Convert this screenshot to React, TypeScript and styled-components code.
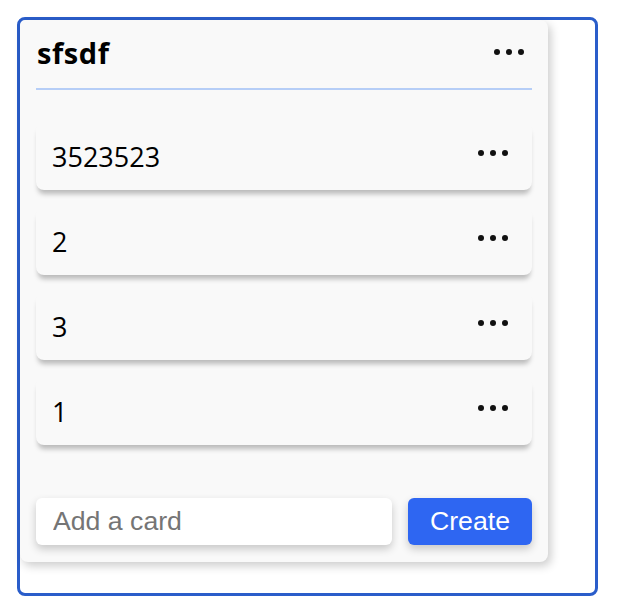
import React from 'react';
import styled, { createGlobalStyle } from 'styled-components';

const GlobalStyle = createGlobalStyle`
  * { box-sizing: border-box; }
  body {
    margin: 0;
    background: #fff;
    font-family: "Open Sans", "Noto Sans", sans-serif;
  }
`;

const Page = styled.div`
  padding: 17px 0 0 17px;
`;

const DropArea = styled.div`
  width: 581px;
  height: 579px;
  border: 3.5px solid #2a5dca;
  border-radius: 8px;
`;

const Column = styled.section`
  width: 528px;
  padding: 16px 16px 17px;
  background: #f9f9f9;
  border-radius: 8px;
  box-shadow: 3px 4px 10px rgba(0, 0, 0, 0.2);
`;

const Header = styled.header`
  height: 54px;
  display: flex;
  align-items: flex-start;
  justify-content: space-between;
  padding-right: 8px;
  border-bottom: 2px solid #b6cef7;
`;

const Title = styled.h2`
  margin: 0 0 0 1px;
  line-height: 33px;
  font-size: 29px;
  letter-spacing: 0.6px;
  font-weight: 700;
  color: #000;
`;

const CardList = styled.div`
  margin-top: 32px;
  display: flex;
  flex-direction: column;
  gap: 17px;
`;

const Card = styled.div`
  height: 68px;
  display: flex;
  align-items: center;
  justify-content: space-between;
  padding: 0 24px 0 16px;
  background: #f9f9f9;
  border-radius: 8px;
  box-shadow: 0 6px 5px -2px rgba(0, 0, 0, 0.25);
  font-size: 27px;
  color: #000;
`;

const MenuButton = styled.button<{ $top?: number }>`
  border: none;
  background: none;
  padding: 0;
  margin-top: ${p => p.$top ?? 0}px;
  display: flex;
  cursor: pointer;
`;

const Form = styled.form`
  margin-top: 53px;
  display: flex;
  gap: 16px;
`;

const Input = styled.input`
  flex: 1;
  min-width: 0;
  height: 47px;
  border: none;
  border-radius: 6px;
  background: #fff;
  padding: 0 17px;
  font-family: "Liberation Sans", Arial, sans-serif;
  font-size: 26.67px;
  box-shadow: 0 4px 8px rgba(0, 0, 0, 0.2);
  outline: none;
  &::placeholder { color: #757575; }
`;

const CreateButton = styled.button`
  flex: 0 0 124px;
  height: 47px;
  border: none;
  border-radius: 6px;
  background: #2e66f2;
  color: #fff;
  font-family: "Liberation Sans", Arial, sans-serif;
  font-size: 26.67px;
  box-shadow: 0 4px 8px rgba(0, 0, 0, 0.2);
  cursor: pointer;
`;

const Dots = () => (
  <svg width="30" height="6" viewBox="0 0 30 6">
    <circle cx="3" cy="3" r="3" fill="#111" />
    <circle cx="15" cy="3" r="3" fill="#111" />
    <circle cx="27" cy="3" r="3" fill="#111" />
  </svg>
);

const cards = ['3523523', '2', '3', '1'];

export default function App() {
  return (
    <Page>
      <GlobalStyle />
      <DropArea>
        <Column>
          <Header>
            <Title>sfsdf</Title>
            <MenuButton $top={13} aria-label="List menu"><Dots /></MenuButton>
          </Header>
          <CardList>
            {cards.map((c, i) => (
              <Card key={i}>
                <span>{c}</span>
                <MenuButton $top={-6} aria-label="Card menu"><Dots /></MenuButton>
              </Card>
            ))}
          </CardList>
          <Form onSubmit={e => e.preventDefault()}>
            <Input placeholder="Add a card" />
            <CreateButton type="submit">Create</CreateButton>
          </Form>
        </Column>
      </DropArea>
    </Page>
  );
}
